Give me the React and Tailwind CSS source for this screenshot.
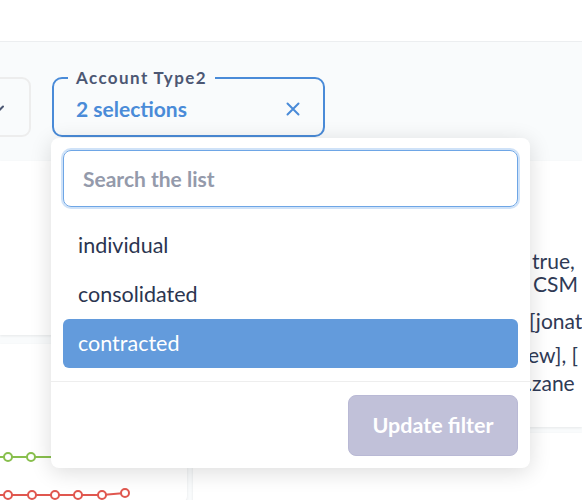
export default function App() {
  const redX = [8, 32, 55, 78, 102];
  return (
    <div className="relative w-[582px] h-[500px] overflow-hidden bg-[#f9fbfc] font-['Lato','Noto_Sans',sans-serif]">
      <div className="h-[42px] bg-white border-b border-[#eceef0]" />

      <div className="flex items-end pt-[26px] pb-[24px]">
        <div className="ml-[-109px] w-[140px] h-[60px] shrink-0 rounded-[9px] border-2 border-[#ededed] flex items-center justify-end pr-[25px]">
          <svg width="12" height="12" viewBox="0 0 12 12" className="mt-[4px]">
            <path d="M1 3.5 L6 8.5 L11 3.5" fill="none" stroke="#4c5773" strokeWidth="2" strokeLinecap="round" strokeLinejoin="round" />
          </svg>
        </div>
        <fieldset className="ml-[21px] w-[273px] shrink-0 rounded-[10px] border-2 border-[#4a8bd8]">
          <legend className="ml-[14px] px-[8px] text-[17px] leading-[20px] font-bold tracking-[1.4px] text-[#4c5773]">
            Account Type2
          </legend>
          <div className="flex items-center justify-between pl-[22px] pr-[23px] pt-[8px] pb-[13px]">
            <span className="text-[21px] leading-[26px] font-bold text-[#4a8bd8]">2 selections</span>
            <svg width="14" height="14" viewBox="0 0 14 14">
              <path d="M1.5 1.5 L12.5 12.5 M12.5 1.5 L1.5 12.5" stroke="#4a8bd8" strokeWidth="2" strokeLinecap="round" />
            </svg>
          </div>
        </fieldset>
      </div>

      <div className="flex items-start gap-[6px]">
        <div className="w-[187px] shrink-0 flex flex-col gap-[9px]">
          <div className="h-[174px] bg-white rounded-r-[8px] shadow-[0_1px_3px_rgba(0,0,0,0.08)]" />
          <div className="h-[160px] bg-white rounded-r-[8px] shadow-[0_1px_3px_rgba(0,0,0,0.08)]">
            <svg width="187" height="160" viewBox="0 0 187 160">
              <line x1="0" y1="113" x2="187" y2="113" stroke="#88bf4d" strokeWidth="2" />
              {[8, 31].map((x) => (
                <circle key={x} cx={x} cy="113" r="4" fill="white" stroke="#88bf4d" strokeWidth="2" />
              ))}
              <polyline points="0,151 8,151 32,151 55,151 78,151 102,151 125,149" fill="none" stroke="#e0574f" strokeWidth="2" />
              {redX.map((x) => (
                <circle key={x} cx={x} cy="151" r="4" fill="white" stroke="#e0574f" strokeWidth="2" />
              ))}
              <circle cx="125" cy="149" r="4" fill="white" stroke="#e0574f" strokeWidth="2" />
            </svg>
          </div>
        </div>
        <div className="flex-1 flex flex-col gap-[6px]">
          <div className="h-[266px] overflow-hidden bg-white rounded-l-[8px] shadow-[0_1px_3px_rgba(0,0,0,0.08)] pt-[88px] text-[21px] leading-[23px] text-[#2f3a55] whitespace-nowrap">
            <div className="pl-[339px]">true,</div>
            <div className="pl-[340px]">CSM</div>
            <div className="pl-[336px] mt-[14px]">[jonat</div>
            <div className="pl-[335px] mt-[11px]">ew], [</div>
            <div className="pl-[334px] mt-[5px]">.zane</div>
          </div>
          <div className="h-[80px] bg-white rounded-l-[8px] shadow-[0_1px_3px_rgba(0,0,0,0.08)]" />
        </div>
      </div>

      <div className="absolute left-[51px] top-[138px] w-[479px] bg-white rounded-[8px] shadow-[0_4px_22px_rgba(0,0,0,0.14)]">
        <div className="px-3 pt-3">
          <div className="h-[57px] rounded-[8px] border border-[#6ea6e6] ring-2 ring-[#cfe2f8] flex items-center pl-[19px] text-[21px] font-bold text-[#949aab]">
            Search the list
          </div>
          <div className="mt-[14px] flex flex-col text-[21.5px] text-[#2b3550]">
            <div className="h-[49px] flex items-center pl-[15px]">individual</div>
            <div className="h-[49px] flex items-center pl-[15px]">consolidated</div>
            <div className="h-[49px] flex items-center pl-[15px] rounded-[6px] bg-[#639bdc] text-white">contracted</div>
          </div>
        </div>
        <div className="mt-[13px] border-t border-[#eeeeee] flex justify-end pt-[13px] pb-[12px] pr-[12px]">
          <div className="w-[170px] h-[61px] rounded-[8px] bg-[#c1c1d9] border border-[#b9b9d5] flex items-center justify-center text-[21.5px] font-bold text-white">
            Update filter
          </div>
        </div>
      </div>
    </div>
  );
}
